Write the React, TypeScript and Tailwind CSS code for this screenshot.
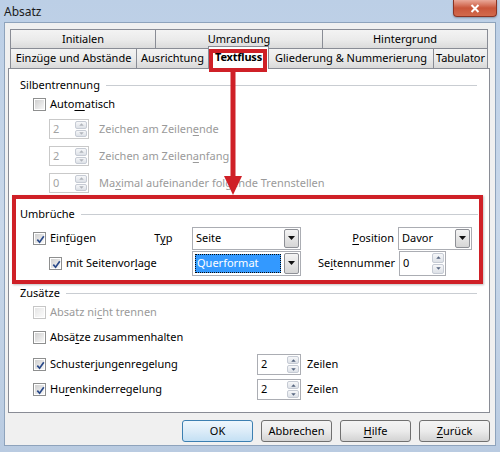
import React from "react";

const font = { fontFamily: '"Noto Sans", "Open Sans", Arial, sans-serif' };

// keyboard accelerator letter
const U = ({ children }: { children: React.ReactNode }) => <span className="underline underline-offset-[2px]">{children}</span>;

const Check = ({ on = false, off = false }: { on?: boolean; off?: boolean }) => (
  <span className={`relative flex h-[13px] w-[13px] shrink-0 border bg-white p-px ${off ? "border-[#c6c6c6]" : "border-[#8e8f8f]"}`}>
    <span className={`h-full w-full bg-gradient-to-br ${off ? "from-[#e6e6e6] to-[#fbfbfb]" : "from-[#d0d0d0] to-[#f7f7f7]"}`} />
    {on && (
      <svg viewBox="0 0 11 11" className="absolute left-px top-px h-[11px] w-[11px]">
        <path d="M2.3 5.6 L4.6 8.2 L8.8 2.2" fill="none" stroke="#2a4a8a" strokeWidth="1.7" />
      </svg>
    )}
  </span>
);

const Spin = ({ value, w, off = false }: { value: string; w: string; off?: boolean }) => (
  <div className={`flex h-full items-stretch border bg-white ${w} ${off ? "border-[#c9c9c9] text-[#a3a3a3]" : "border-[#abadb3] text-black"}`}>
    <span className="flex flex-1 items-center pl-[3px]">{value}</span>
    <span className="m-px flex w-[12px] flex-col gap-px">
      {["M1 4 L3.5 1.5 L6 4", "M1 1.5 L3.5 4 L6 1.5"].map((d) => (
        <span key={d} className="flex flex-1 items-center justify-center rounded-[2px] border border-[#c6cbd4] bg-gradient-to-b from-[#f6f7f9] to-[#dde1e7]">
          <svg viewBox="0 0 7 5.5" className="h-[5px] w-[7px]">
            <path d={d} fill={off ? "#b0b4bb" : "#56657f"} />
          </svg>
        </span>
      ))}
    </span>
  </div>
);

const Select = ({ value, w, focus = false }: { value: string; w: string; focus?: boolean }) => (
  <div className={`flex h-full items-stretch border border-[#abadb3] bg-white ${w}`}>
    <span className="flex flex-1 items-stretch p-[2px]">
      <span className={`flex flex-1 items-center pl-[1px] ${focus ? "border border-dotted border-[#0a0a0a] bg-[#3399ff] text-white" : ""}`}>{value}</span>
    </span>
    <span className="m-px flex w-[15px] items-center justify-center rounded-[2px] border border-[#8e9096] bg-gradient-to-b from-[#f4f4f4] to-[#d6d6d6]">
      <svg viewBox="0 0 7 4" className="h-[4px] w-[7px]">
        <path d="M0 0 H7 L3.5 4 Z" fill="#111" />
      </svg>
    </span>
  </div>
);

const Header = ({ title, className }: { title: string; className: string }) => (
  <div className={`flex h-[16px] items-center ${className}`}>
    <span>{title}</span>
    <span className="ml-[6px] h-px flex-1 bg-[#c9cdd2]" />
  </div>
);

const Tab = ({ label, w, first = false }: { label: string; w: string; first?: boolean }) => (
  <div className={`flex h-[20px] items-center justify-center border-x border-t border-[#898c95] bg-gradient-to-b from-[#f3f3f3] via-[#ebebeb] to-[#d9d9d9] ${w} ${first ? "" : "-ml-px"}`}>
    {label}
  </div>
);

const Button = ({ children, main = false }: { children: React.ReactNode; main?: boolean }) => (
  <div className={`flex h-[22px] w-[71px] items-center justify-center rounded-[3px] border ${main ? "border-[#3c7fb1] bg-gradient-to-b from-[#eef7fd] via-[#dcecf8] to-[#c4e0f4]" : "border-[#707070] bg-gradient-to-b from-[#f4f4f4] via-[#ebebeb] to-[#d3d3d3]"}`}>
    {children}
  </div>
);

export default function App() {
  return (
    <div style={font} className="relative h-[452px] w-[500px] overflow-hidden bg-gradient-to-b from-[#bccfe6] via-[#c9d8ea] to-[#b9cbe1] text-[11px] text-black">
      {/* title bar */}
      <div className="flex h-[22px] items-start justify-between">
        <span className="ml-[4px] mt-[3px] text-[12px] text-[#1b1b1b]">Absatz</span>
        <div className="mr-[3px] flex h-[17px] w-[44px] items-center justify-center rounded-b-[4px] border border-t-0 border-[#8a3323] bg-gradient-to-b from-[#e9a899] via-[#c9553a] to-[#d2694b] shadow-[0_1px_2px_rgba(0,0,0,0.3)]">
          <svg viewBox="0 0 10 9" className="h-[9px] w-[10px]">
            <path d="M1.5 1 L8.5 8 M8.5 1 L1.5 8" stroke="#fff" strokeWidth="2" />
          </svg>
        </div>
      </div>

      {/* client area */}
      <div className="ml-[4px] flex h-[424px] w-[492px] flex-col border border-[#8ea3bc] bg-[#f0f0f0] pl-[3px] pt-[6px]">
        <div className="ml-[2px] flex h-[20px]">
          <Tab label="Initialen" w="w-[146px]" first />
          <Tab label="Umrandung" w="w-[168px]" />
          <Tab label="Hintergrund" w="w-[166px]" />
        </div>
        <div className="ml-[2px] -mt-px flex h-[20px] items-end">
          <Tab label="Einzüge und Abstände" w="w-[127px]" first />
          <Tab label="Ausrichtung" w="w-[73px]" />
          <div className="relative z-10 -mb-px -ml-px flex h-[23px] w-[61px] items-center justify-center border-x border-t border-[#898c95] bg-white pb-[1px] font-bold tracking-[-0.2px]">
            Textfluss
            <span className="absolute bottom-[-3px] left-0 right-px top-[2px] border-[4px] border-[#cf2027]" />
          </div>
          <Tab label="Gliederung & Nummerierung" w="w-[166px]" />
          <Tab label="Tabulator" w="w-[55px]" />
        </div>

        {/* tab page */}
        <div className="flex h-[345px] w-[482px] flex-col border border-[#898c95] bg-white">
          <Header title="Silbentrennung" className="mt-[8px] pl-[11px] pr-[12px]" />
          <div className="mt-[3px] flex h-[16px] items-center gap-[4px] pl-[24px]">
            <Check />
            <span>Auto<U>m</U>atisch</span>
          </div>
          {[
            ["2", <>Zeichen am Zeilen<U>e</U>nde</>],
            ["2", <>Zeichen am Zeilen<U>a</U>nfang</>],
            ["0", <>Ma<U>x</U>imal aufeinander folgende Trennstellen</>],
          ].map(([v, label], i) => (
            <div key={i} className="mt-[7px] flex h-[20px] items-center gap-[10px] pl-[40px] text-[#9a9a9a]">
              <Spin value={v as string} w="w-[40px]" off />
              <span>{label}</span>
            </div>
          ))}

          {/* Umbrüche */}
          <div className="ml-[3px] mt-[2px] flex h-[89px] w-[471px] flex-col border-[4px] border-[#cf2027] shadow-[1px_1px_2px_rgba(0,0,0,0.25)]">
            <Header title="Umbrüche" className="mt-[7px] pl-[4px] pr-px" />
            <div className="mt-[5px] grid h-[21px] grid-cols-[159px_109px_97px_74px] pl-[17px]">
              <div className="flex items-center gap-[4px]">
                <Check on />
                <span>Ein<U>f</U>ügen</span>
                <span className="ml-[54px]">T<U>y</U>p</span>
              </div>
              <Select value="Seite" w="w-[109px]" />
              <div className="flex items-center justify-end pr-[4px]">
                <span><U>P</U>osition</span>
              </div>
              <Select value="Davor" w="w-[74px]" />
            </div>
            <div className="mt-[3px] grid h-[22px] grid-cols-[159px_109px_97px_74px] pl-[17px]">
              <div className="flex items-center gap-[4px] pl-[16px]">
                <Check on />
                <span>mit Seitenvor<U>l</U>age</span>
              </div>
              <Select value="Querformat" w="w-[109px]" focus />
              <div className="flex items-center overflow-hidden whitespace-nowrap pl-[17px]">
                <span>Se<U>i</U>tennummer</span>
              </div>
              <div className="ml-px h-full">
                <Spin value="0" w="w-[47px]" />
              </div>
            </div>
          </div>

          <Header title="Zusätze" className="mt-[1px] pl-[11px] pr-[12px]" />
          <div className="mt-[3px] flex h-[16px] items-center gap-[4px] pl-[24px] text-[#9a9a9a]">
            <Check off />
            <span>Absatz ni<U>c</U>ht trennen</span>
          </div>
          <div className="mt-[9px] flex h-[16px] items-center gap-[4px] pl-[24px]">
            <Check />
            <span>Absä<U>t</U>ze zusammenhalten</span>
          </div>
          {[
            [<>Schuster<U>j</U>ungenregelung</>, "mt-[9px]"],
            [<>Hu<U>r</U>enkinderregelung</>, "mt-[4px]"],
          ].map(([label, mt], i) => (
            <div key={i} className={`flex h-[21px] items-center pl-[24px] ${mt}`}>
              <div className="flex w-[224px] items-center gap-[4px]">
                <Check on />
                <span>{label}</span>
              </div>
              <Spin value="2" w="w-[44px]" />
              <span className="ml-[6px]">Zeilen</span>
            </div>
          ))}
        </div>

        {/* dialog buttons */}
        <div className="mt-[7px] flex w-[482px] justify-end gap-[8px]">
          <Button main>OK</Button>
          <Button>Abbrechen</Button>
          <Button><U>H</U>ilfe</Button>
          <Button><U>Z</U>urück</Button>
        </div>
      </div>

      {/* annotation arrow from the tab down to the Umbrüche box */}
      <svg className="absolute left-[223px] top-[72px] h-[124px] w-[20px]" viewBox="0 0 20 124">
        <path d="M7.5 0 H12.5 V104 H19 L10 123 L1 104 H7.5 Z" fill="#cf2027" />
      </svg>
    </div>
  );
}
